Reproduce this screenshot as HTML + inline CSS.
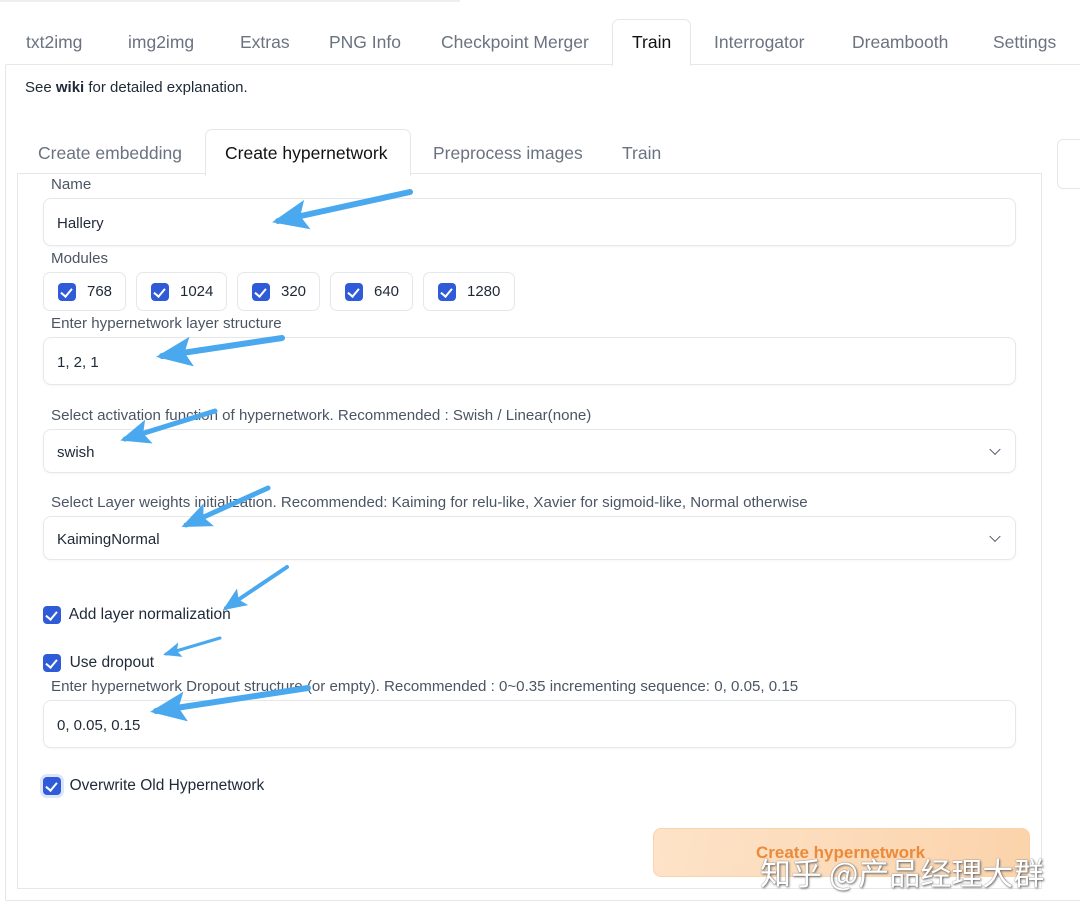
<!DOCTYPE html>
<html><head><meta charset="utf-8"><style>
*{box-sizing:border-box;margin:0;padding:0}
body{width:1080px;height:915px;background:#fff;font-family:"Liberation Sans",sans-serif;position:relative;overflow:hidden;color:#374151}
.a{position:absolute;white-space:nowrap}
.tab{font-size:17.5px;color:#6b7280;top:32px}
.lbl{font-size:15.1px;color:#4b5563}
.inp{position:absolute;left:43px;width:973px;border:1px solid #e5e7eb;border-radius:8px;background:#fff;font-size:15px;color:#1f2937;padding-left:13px;padding-top:2px;display:flex;align-items:center;box-shadow:0 1px 2px rgba(0,0,0,.04)}
.cb{display:inline-block;width:18px;height:18px;border-radius:4px;background:#2f5bd8;position:relative;vertical-align:middle}
.cb:after{content:"";position:absolute;left:5px;top:3px;width:5px;height:9px;border:solid #fff;border-width:0 2px 2px 0;transform:rotate(40deg)}
.mod{position:absolute;top:272px;height:39px;border:1px solid #e5e7eb;border-radius:7px;display:flex;align-items:center;padding-left:14px;font-size:15px;color:#1f2937;gap:11px}
.chev{position:absolute;right:16px;top:50%;width:8px;height:8px;border:solid #4b5563;border-width:0 1.6px 1.6px 0;transform:translateY(-70%) rotate(45deg)}
</style></head><body>
<div class="a" style="left:0;top:0;width:460px;height:2px;background:#eee"></div>
<div class="a tab" style="left:26px">txt2img</div>
<div class="a tab" style="left:128px">img2img</div>
<div class="a tab" style="left:240px">Extras</div>
<div class="a tab" style="left:329px">PNG Info</div>
<div class="a tab" style="left:441px">Checkpoint Merger</div>
<div class="a" style="left:612px;top:19px;width:79px;height:47px;border:1px solid #e5e7eb;border-bottom:none;border-radius:7px 7px 0 0;background:#fff;z-index:2"></div>
<div class="a tab" style="left:632px;color:#111;z-index:3">Train</div>
<div class="a tab" style="left:714px">Interrogator</div>
<div class="a tab" style="left:852px">Dreambooth</div>
<div class="a tab" style="left:993px">Settings</div>
<div class="a" style="left:5px;top:64px;width:1090px;height:837px;border:1.5px solid #e5e7eb;border-radius:2px"></div>
<div class="a" style="left:25px;top:79px;font-size:15px;color:#1f2937">See <b>wiki</b> for detailed explanation.</div>
<div class="a" style="left:1057px;top:139px;width:40px;height:50px;border:1px solid #e5e7eb;border-radius:6px"></div>
<div class="a" style="left:17px;top:173px;width:1025px;height:716px;border:1.5px solid #e5e7eb"></div>
<div class="a tab" style="left:38px;top:143px">Create embedding</div>
<div class="a" style="left:205px;top:129px;width:206px;height:47px;border:1.5px solid #e5e7eb;border-bottom:none;border-radius:7px 7px 0 0;background:#fff"></div>
<div class="a tab" style="left:225px;top:143px;color:#111">Create hypernetwork</div>
<div class="a tab" style="left:433px;top:143px">Preprocess images</div>
<div class="a tab" style="left:622px;top:143px">Train</div>

<div class="a lbl" style="left:51px;top:176px">Name</div>
<div class="inp" style="top:198px;height:48px">Hallery</div>
<div class="a lbl" style="left:51px;top:250px">Modules</div>
<div class="mod" style="left:43px;width:83px"><span class="cb"></span>768</div>
<div class="mod" style="left:136px;width:91px"><span class="cb"></span>1024</div>
<div class="mod" style="left:237px;width:83px"><span class="cb"></span>320</div>
<div class="mod" style="left:330px;width:83px"><span class="cb"></span>640</div>
<div class="mod" style="left:423px;width:92px"><span class="cb"></span>1280</div>
<div class="a lbl" style="left:51px;top:315px">Enter hypernetwork layer structure</div>
<div class="inp" style="top:337px;height:48px">1, 2, 1</div>
<div class="a lbl" style="left:51px;top:407px">Select activation function of hypernetwork. Recommended : Swish / Linear(none)</div>
<div class="inp" style="top:429px;height:44px">swish<span class="chev"></span></div>
<div class="a lbl" style="left:51px;top:494px">Select Layer weights initialization. Recommended: Kaiming for relu-like, Xavier for sigmoid-like, Normal otherwise</div>
<div class="inp" style="top:516px;height:44px">KaimingNormal<span class="chev"></span></div>
<div class="a" style="left:43px;top:606px;font-size:15.5px;color:#1f2937"><span class="cb"></span>&nbsp; Add layer normalization</div>
<div class="a" style="left:43px;top:654px;font-size:15.5px;color:#1f2937"><span class="cb"></span>&nbsp; Use dropout</div>
<div class="a lbl" style="left:51px;top:678px">Enter hypernetwork Dropout structure (or empty). Recommended : 0~0.35 incrementing sequence: 0, 0.05, 0.15</div>
<div class="inp" style="top:700px;height:48px">0, 0.05, 0.15</div>
<div class="a" style="left:43px;top:777px;font-size:15.5px;color:#1f2937"><span class="cb" style="box-shadow:0 0 0 3px #dbe6fb"></span>&nbsp; Overwrite Old Hypernetwork</div>
<div class="a" style="left:653px;top:828px;width:377px;height:49px;border-radius:8px;background:linear-gradient(100deg,#fde3c8,#fbd3ab);border:1px solid #fbd3ab"></div>
<div class="a" style="left:756px;top:843px;font-size:17px;font-weight:bold;color:#ea8a3a">Create hypernetwork</div>
<div class="a" style="left:760px;top:849px;font-size:31px;color:#fff;font-family:'Noto Sans CJK SC',sans-serif;text-shadow:1px 1px 2px #666,0 0 1px #555">知乎 @产品经理大群</div>

<svg class="a" style="left:0;top:0" width="1080" height="915">
<defs><marker id="h" markerWidth="6" markerHeight="5" refX="5" refY="2.5" orient="auto" markerUnits="strokeWidth"><path d="M0,0 L6,2.5 L0,5 L1.2,2.5Z" fill="#4aa8ee"/></marker></defs>
<g stroke="#4aa8ee" stroke-linecap="round" fill="none" marker-end="url(#h)">
<line x1="410" y1="192" x2="278" y2="221" stroke-width="6"/>
<line x1="282" y1="338" x2="162" y2="356" stroke-width="6"/>
<line x1="215" y1="411" x2="125" y2="439" stroke-width="5"/>
<line x1="268" y1="488" x2="186" y2="525" stroke-width="5"/>
<line x1="287" y1="567" x2="226" y2="608" stroke-width="4"/>
<line x1="220" y1="638" x2="166" y2="654" stroke-width="3"/>
<line x1="308" y1="688" x2="156" y2="711" stroke-width="6"/>
</g></svg>
</body></html>
